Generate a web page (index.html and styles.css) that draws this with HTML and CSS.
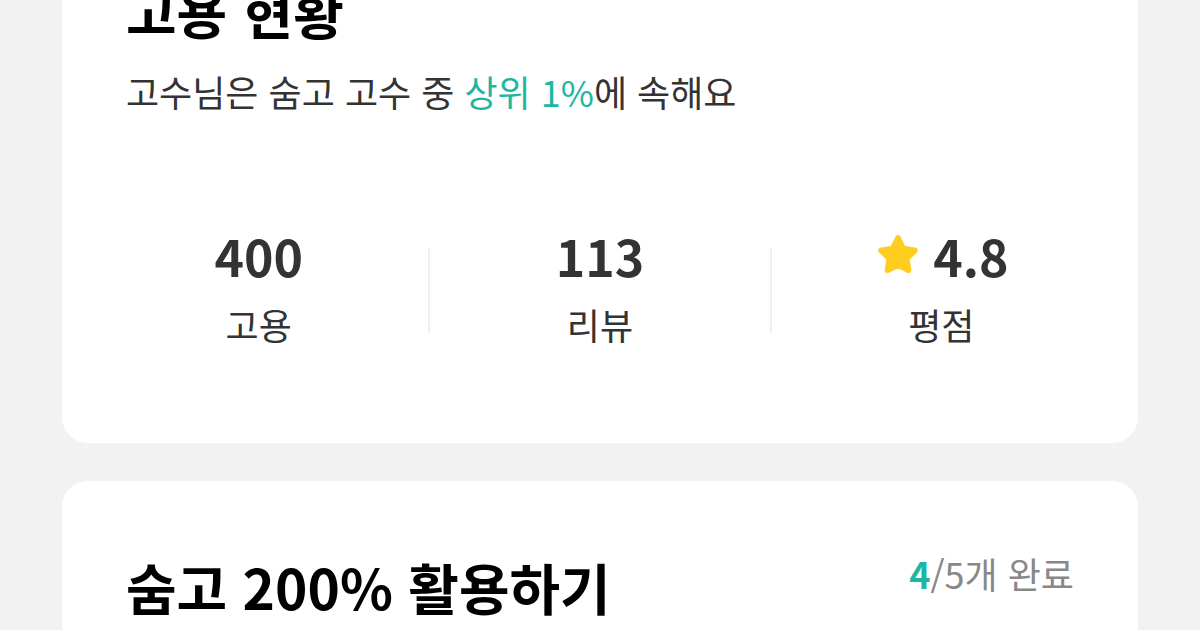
FILE: index.html
```html
<!DOCTYPE html>
<html lang="ko">
<head>
   <meta charset="utf-8">
   <title>고수 프로필</title>
   <link rel="stylesheet" href="styles.css">
</head>
<body>
   <div class="page">

      <!-- 고용 현황 -->
      <section class="card card-hire">
         <h2 class="card-title">고용 현황</h2>
         <p class="card-desc">고수님은 숨고 고수 중 <span class="accent">상위 1%</span>에 속해요</p>

         <div class="stats">
            <div class="stat">
               <div class="stat-value">400</div>
               <div class="stat-label">고용</div>
            </div>
            <div class="divider"></div>
            <div class="stat">
               <div class="stat-value">113</div>
               <div class="stat-label">리뷰</div>
            </div>
            <div class="divider"></div>
            <div class="stat">
               <div class="stat-value">
                  <svg class="star" viewBox="0 0 24 24" width="48" height="48" aria-hidden="true">
                     <polygon points="12,3.6 14.6,8.9 20.4,9.7 16.2,13.8 17.2,19.6 12,16.9 6.8,19.6 7.8,13.8 3.6,9.7 9.4,8.9"/>
                  </svg>
                  <span>4.8</span>
               </div>
               <div class="stat-label">평점</div>
            </div>
         </div>
      </section>

      <!-- 숨고 200% 활용하기 -->
      <section class="card card-guide">
         <div class="card-head">
            <h2 class="card-title">숨고 200% 활용하기</h2>
            <div class="progress"><b class="accent">4</b>/5개 완료</div>
         </div>
      </section>

   </div>
</body>
</html>
```

FILE: styles.css
```css
body {
   margin: 0;
   background-color: #f2f2f2;
   font-family: "Noto Sans CJK KR", "Noto Sans", sans-serif;
   color: #000;
}
.page {
   padding: 0 62px;
   margin-top: -95px;
   display: flex;
   flex-direction: column;
   gap: 38px;
}
.card {
   background-color: #fff;
   border-radius: 26px;
   padding: 74px 64px 0 64px;
}
.card-hire {
   padding-bottom: 97px;
}
.card-guide {
   padding-bottom: 120px;
}
.card-title {
   margin: 0;
   font-size: 55px;
   font-weight: 700;
   line-height: 62px;
}
.card-desc {
   margin: 26px 0 0 0;
   font-size: 36px;
   line-height: 48px;
   color: #333;
}
.accent {
   color: #1db7a1;
}
.stats {
   display: grid;
   grid-template-columns: 1fr 2px 1fr 2px 1fr;
   align-items: center;
   margin: 115px -37px 0 -37px;
}
.divider {
   height: 85px;
   margin-top: 4px;
   background-color: #efefef;
}
.stat {
   display: flex;
   flex-direction: column;
   align-items: center;
   gap: 22px;
}
.stat-value {
   display: flex;
   align-items: center;
   gap: 11px;
   font-size: 50px;
   font-weight: 700;
   line-height: 50px;
   color: #333;
}
.star {
   fill: #ffcd1f;
   stroke: #ffcd1f;
   stroke-width: 3;
   stroke-linejoin: round;
}
.stat-label {
   font-size: 36px;
   line-height: 44px;
   color: #333;
}
.card-head {
   display: flex;
   justify-content: space-between;
   align-items: flex-start;
}
.progress {
   font-size: 36px;
   line-height: 44px;
   color: #888;
   margin-top: -4px;
}
.progress b {
   font-weight: 600;
}
```
